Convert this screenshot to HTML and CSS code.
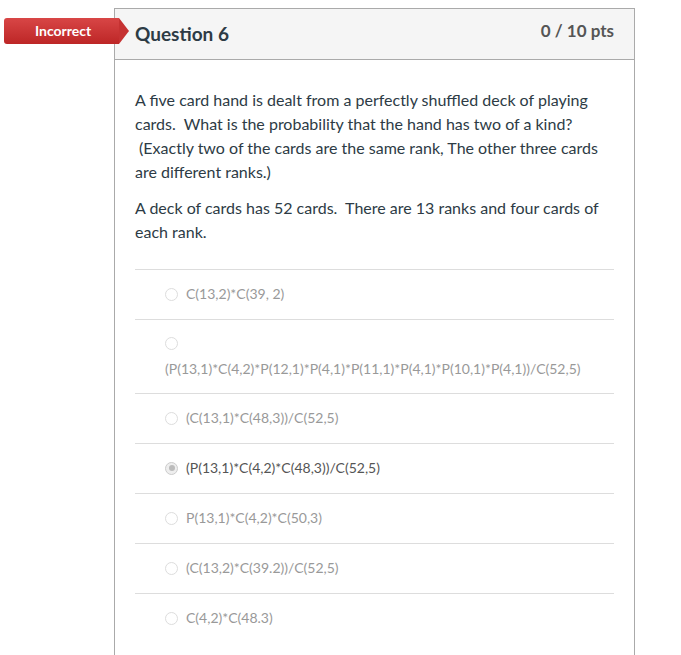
FILE: index.html
```html
<!DOCTYPE html>
<html>
<head>
<meta charset="utf-8">
<link rel="stylesheet" href="styles.css">
</head>
<body>
<div class="page">
  <div class="banner">Incorrect</div>
  <div class="card">
    <div class="card-header">
      <h2 class="q-title">Question 6</h2>
      <div class="q-points">0 / 10 pts</div>
    </div>
    <div class="card-body">
      <p class="q-text">A five card hand is dealt from a perfectly shuffled deck of playing cards.&nbsp; What is the probability that the hand has two of a kind? &nbsp;(Exactly two of the cards are the same rank, The other three cards are different ranks.)</p>
      <p class="q-text">A deck of cards has 52 cards.&nbsp; There are 13 ranks and four cards of each rank.</p>
      <div class="answers">
        <div class="answer"><span class="radio"></span><span class="a-text">C(13,2)*C(39, 2)</span></div>
        <div class="answer wrap"><span class="radio"></span><span class="a-text">(P(13,1)*C(4,2)*P(12,1)*P(4,1)*P(11,1)*P(4,1)*P(10,1)*P(4,1))/C(52,5)</span></div>
        <div class="answer"><span class="radio"></span><span class="a-text">(C(13,1)*C(48,3))/C(52,5)</span></div>
        <div class="answer selected"><span class="radio checked"></span><span class="a-text">(P(13,1)*C(4,2)*C(48,3))/C(52,5)</span></div>
        <div class="answer"><span class="radio"></span><span class="a-text">P(13,1)*C(4,2)*C(50,3)</span></div>
        <div class="answer"><span class="radio"></span><span class="a-text">(C(13,2)*C(39.2))/C(52,5)</span></div>
        <div class="answer"><span class="radio"></span><span class="a-text">C(4,2)*C(48.3)</span></div>
      </div>
    </div>
  </div>
</div>
</body>
</html>
```
FILE: styles.css
```css
html, body {
  margin: 0;
  padding: 0;
  background: #fff;
  font-family: Lato, "Open Sans", sans-serif;
  color: #2d3b45;
}
.page {
  position: relative;
  padding-top: 8px;
  height: 647px;
  overflow: hidden;
}
.banner {
  position: absolute;
  left: 4px;
  top: 18px;
  width: 115px;
  height: 26px;
  line-height: 25px;
  box-sizing: border-box;
  padding-left: 31px;
  color: #fff;
  font-size: 14px;
  font-weight: 700;
  background: linear-gradient(#d84646, #bd2626);
  border-radius: 3px 0 0 3px;
  z-index: 2;
}
.banner::after {
  content: "";
  position: absolute;
  right: -10px;
  top: 0;
  border-top: 13px solid transparent;
  border-bottom: 13px solid transparent;
  border-left: 10px solid #c63232;
}
.card {
  margin-left: 114px;
  width: 521px;
  box-sizing: border-box;
  border: 1px solid #aaa;
  border-bottom: none;
  min-height: 700px;
}
.card-header {
  height: 50px;
  background: #f5f5f5;
  border-bottom: 1px solid #aaa;
  display: flex;
  justify-content: space-between;
  align-items: flex-start;
  padding: 0 20px;
}
.q-title {
  margin: 13px 0 0;
  font-size: 19px;
  font-weight: 700;
  color: #2d3b45;
}
.q-points {
  margin-top: 11px;
  font-size: 17px;
  font-weight: 700;
  color: #555;
}
.card-body {
  padding: 28px 20px 0;
}
.q-text {
  margin: 0 0 12px;
  font-size: 16px;
  line-height: 24px;
  color: #2d3b45;
}
.answers {
  margin-top: 25px;
}
.answer {
  border-top: 1px solid #ddd;
  padding: 14px 0 15px 30px;
  display: flex;
  align-items: center;
  height: 20px;
  font-size: 14px;
  line-height: 20px;
  color: #999;
}
.answer.wrap {
  height: auto;
  flex-direction: column;
  align-items: flex-start;
  padding-top: 15px;
  padding-bottom: 14px;
}
.answer.wrap .radio {
  margin: 2px 0 9px;
}
.radio {
  width: 13px;
  height: 13px;
  border: 1px solid #ddd;
  border-radius: 50%;
  background: #fff;
  box-sizing: border-box;
  margin-right: 8px;
  flex: none;
  position: relative;
}
.radio.checked {
  border-color: #ccc;
  background: #eee;
}
.radio.checked::after {
  content: "";
  position: absolute;
  left: 2.5px;
  top: 2.5px;
  width: 6px;
  height: 6px;
  border-radius: 50%;
  background: #bbb;
}
.answer.selected {
  color: #555;
}
```
